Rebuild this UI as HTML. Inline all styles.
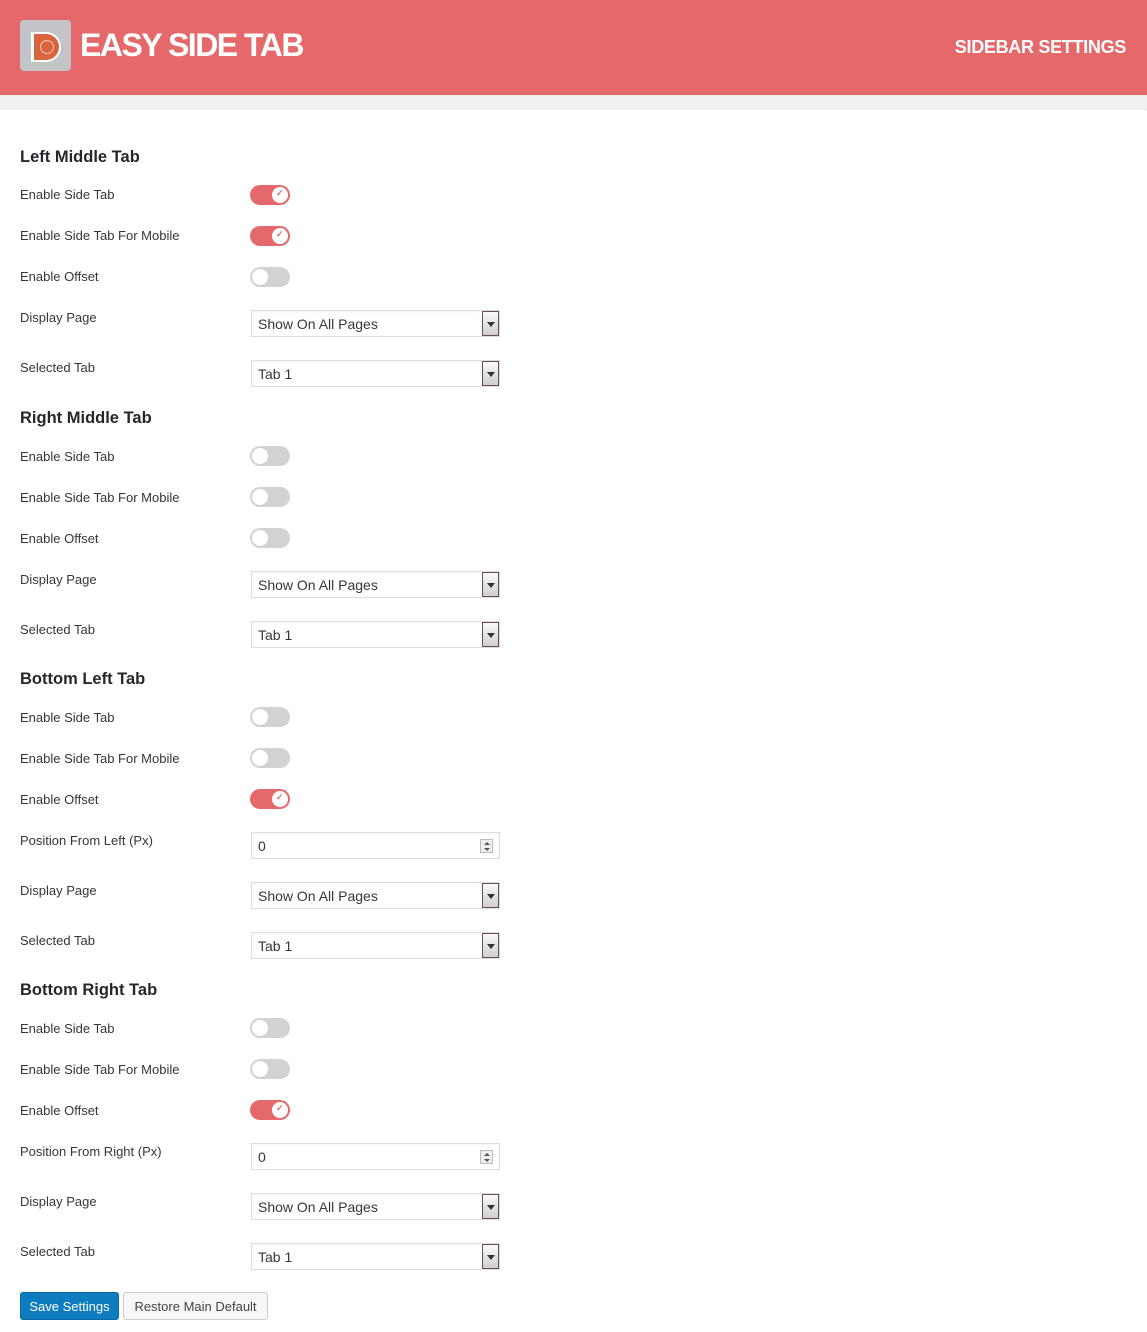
<!DOCTYPE html>
<html><head><meta charset="utf-8"><style>
*{margin:0;padding:0;box-sizing:border-box}
body{width:1147px;height:1332px;background:#fff;position:relative;font-family:"Liberation Sans",sans-serif;color:#23282d;overflow:hidden}
.hd{position:absolute;left:0;top:0;width:1147px;height:95px;background:#e5696b}
.strip{position:absolute;left:0;top:95px;width:1147px;height:15px;background:#f1f1f1;border-bottom:1px dotted #e2e2e2}
.logo{position:absolute;left:20px;top:20px;width:51px;height:51px;background:#c3c4c8;border-radius:4px}
.d{position:absolute;left:11px;top:12px;width:30px;height:30px;background:#d9653e;border:2px solid #fff;border-left:3px solid #fff;border-radius:0 15px 15px 0}
.d i{position:absolute;left:6px;top:6px;width:14px;height:14px;border:1px solid #f7c9b5;border-radius:50%}
.title{position:absolute;left:80px;top:27px;font-size:32px;font-weight:bold;color:#fff;letter-spacing:-1.5px}
.ss{position:absolute;right:21px;top:37px;font-size:18px;font-weight:bold;color:#fff;letter-spacing:-0.3px}
.h{position:absolute;left:20px;font-size:16.5px;font-weight:bold;color:#23282d;margin-top:1px}
.l{position:absolute;left:20px;font-size:13px;color:#32373c;margin-top:1px}
.t{position:absolute;left:250px;width:40px;height:20px;border-radius:10px;background:#d2d2d2}
.t::after{content:"";position:absolute;left:2px;top:2px;width:16px;height:16px;border-radius:50%;background:#fff}
.t.on{background:#e5696b}
.t.on::after{left:22px}
.t.on::before{content:"✓";position:absolute;left:26px;top:3px;font-size:9px;color:#e5696b;z-index:2;font-weight:bold}
.s{position:absolute;left:251px;width:249px;height:27px;border:1px solid #ddd;box-shadow:inset 0 1px 2px rgba(0,0,0,.05);font-size:14px;padding:5px 0 0 6px;color:#32373c}
.s b{position:absolute;right:0;top:0;width:17px;height:25px;border:1px solid #6b4b5b;background:linear-gradient(#fafafa,#cfcfcf)}
.s b::after{content:"";position:absolute;left:4px;top:10px;border-left:4px solid transparent;border-right:4px solid transparent;border-top:5px solid #333}
.n b{position:absolute;right:6px;top:6px;width:13px;height:14px;border:1px solid #bbb;background:#eee}
.n b::before{content:"";position:absolute;left:3px;top:2px;border-left:3px solid transparent;border-right:3px solid transparent;border-bottom:3px solid #555}
.n b::after{content:"";position:absolute;left:3px;top:8px;border-left:3px solid transparent;border-right:3px solid transparent;border-top:3px solid #555}
.btn{position:absolute;top:1292px;height:28px;font-size:13px;border-radius:3px;padding:6px 0 0;text-align:center}
</style></head><body>
<div class="hd"></div><div class="strip"></div>
<div class="logo"><div class="d"><i></i></div></div>
<div class="title">EASY SIDE TAB</div>
<div class="ss">SIDEBAR SETTINGS</div>

<div class="h" style="top:147px">Left Middle Tab</div>
<div class="l" style="top:186px">Enable Side Tab</div><div class="t on" style="top:185px"></div>
<div class="l" style="top:227px">Enable Side Tab For Mobile</div><div class="t on" style="top:226px"></div>
<div class="l" style="top:268px">Enable Offset</div><div class="t" style="top:267px"></div>
<div class="l" style="top:309px">Display Page</div><div class="s" style="top:310px">Show On All Pages<b></b></div>
<div class="l" style="top:359px">Selected Tab</div><div class="s" style="top:360px">Tab 1<b></b></div>

<div class="h" style="top:408px">Right Middle Tab</div>
<div class="l" style="top:448px">Enable Side Tab</div><div class="t" style="top:446px"></div>
<div class="l" style="top:489px">Enable Side Tab For Mobile</div><div class="t" style="top:487px"></div>
<div class="l" style="top:530px">Enable Offset</div><div class="t" style="top:528px"></div>
<div class="l" style="top:571px">Display Page</div><div class="s" style="top:571px">Show On All Pages<b></b></div>
<div class="l" style="top:621px">Selected Tab</div><div class="s" style="top:621px">Tab 1<b></b></div>

<div class="h" style="top:669px">Bottom Left Tab</div>
<div class="l" style="top:709px">Enable Side Tab</div><div class="t" style="top:707px"></div>
<div class="l" style="top:750px">Enable Side Tab For Mobile</div><div class="t" style="top:748px"></div>
<div class="l" style="top:791px">Enable Offset</div><div class="t on" style="top:789px"></div>
<div class="l" style="top:832px">Position From Left (Px)</div><div class="s n" style="top:832px">0<b></b></div>
<div class="l" style="top:882px">Display Page</div><div class="s" style="top:882px">Show On All Pages<b></b></div>
<div class="l" style="top:932px">Selected Tab</div><div class="s" style="top:932px">Tab 1<b></b></div>

<div class="h" style="top:980px">Bottom Right Tab</div>
<div class="l" style="top:1020px">Enable Side Tab</div><div class="t" style="top:1018px"></div>
<div class="l" style="top:1061px">Enable Side Tab For Mobile</div><div class="t" style="top:1059px"></div>
<div class="l" style="top:1102px">Enable Offset</div><div class="t on" style="top:1100px"></div>
<div class="l" style="top:1143px">Position From Right (Px)</div><div class="s n" style="top:1143px">0<b></b></div>
<div class="l" style="top:1193px">Display Page</div><div class="s" style="top:1193px">Show On All Pages<b></b></div>
<div class="l" style="top:1243px">Selected Tab</div><div class="s" style="top:1243px">Tab 1<b></b></div>

<div class="btn" style="left:20px;width:99px;background:#0e7dc0;color:#fff;border:1px solid #0a6aa6">Save Settings</div>
<div class="btn" style="left:123px;width:145px;background:#f7f7f7;color:#444;border:1px solid #ccc">Restore Main Default</div>
</body></html>
